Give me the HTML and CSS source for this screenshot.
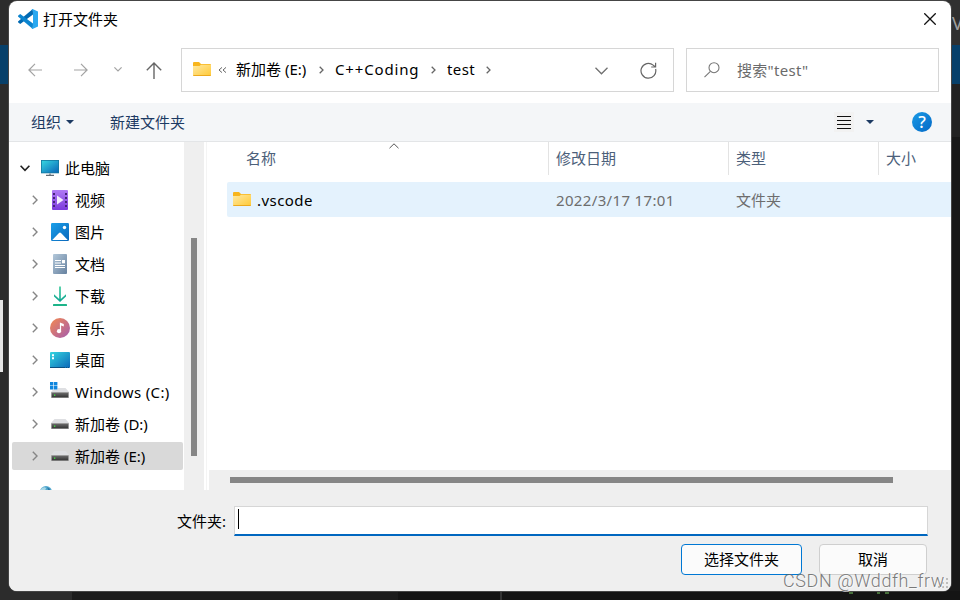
FILE: index.html
```
<!DOCTYPE html>
<html lang="zh-CN">
<head>
    <meta charset="UTF-8">
    <meta name="viewport" content="width=device-width, initial-scale=1.0">
    <title>打开文件夹</title>
    <link rel="stylesheet" href="styles.css">
</head>
<body>
    <!-- Shared icons -->
    <svg class="defs" width="0" height="0">
        <defs>
            <linearGradient id="folderFill" x1="0" y1="0" x2="1" y2="1">
                <stop offset="0" stop-color="#ffe9a2"/>
                <stop offset="1" stop-color="#ffc937"/>
            </linearGradient>
            <linearGradient id="screenFill" x1="0" y1="0" x2="1" y2="1">
                <stop offset="0" stop-color="#35d6e0"/>
                <stop offset="1" stop-color="#0b66b8"/>
            </linearGradient>
            <linearGradient id="videoFill" x1="0" y1="0" x2="0" y2="1">
                <stop offset="0" stop-color="#b07af5"/>
                <stop offset="1" stop-color="#7c3bdc"/>
            </linearGradient>
            <linearGradient id="pictureFill" x1="0" y1="0" x2="1" y2="1">
                <stop offset="0" stop-color="#1ba0ea"/>
                <stop offset="1" stop-color="#0a67ba"/>
            </linearGradient>
            <linearGradient id="docFill" x1="0" y1="0" x2="1" y2="1">
                <stop offset="0" stop-color="#b3c8da"/>
                <stop offset="1" stop-color="#66819f"/>
            </linearGradient>
            <linearGradient id="downFill" x1="0" y1="0" x2="0" y2="1">
                <stop offset="0" stop-color="#2fc796"/>
                <stop offset="1" stop-color="#12a594"/>
            </linearGradient>
            <linearGradient id="musicFill" x1="0" y1="0" x2="1" y2="1">
                <stop offset="0" stop-color="#f5894f"/>
                <stop offset="1" stop-color="#a35cb0"/>
            </linearGradient>
            <linearGradient id="driveFill" x1="0" y1="0" x2="0" y2="1">
                <stop offset="0" stop-color="#6a6a6a"/>
                <stop offset="1" stop-color="#333"/>
            </linearGradient>
            <symbol id="folder" viewBox="0 0 18 14">
                <path d="M0 1Q0 0 1 0H6L8 2H17Q18 2 18 3V6H0Z" fill="#f8b51c"/>
                <path d="M0 4H6.5L8 2.7H18V13Q18 14 17 14H1Q0 14 0 13Z" fill="url(#folderFill)"/>
                <path d="M0.3 13.5H17.7" stroke="#eda91c"/>
            </symbol>
            <symbol id="drive" viewBox="0 0 18 10">
                <path d="M3.5 0H14.5L18 4V5H0V4Z" fill="#dedfe2"/>
                <rect y="4" width="18" height="6" rx=".6" fill="#a8a8a8"/>
                <rect x=".8" y="4.8" width="16.4" height="4.6" fill="url(#driveFill)"/>
                <rect x="3" y="6.5" width="1.3" height="1.3" fill="#3cf03c"/>
            </symbol>
            <symbol id="chevron" viewBox="0 0 6 10">
                <path d="M.8 .8L5 5L.8 9.2" fill="none" stroke="#868686" stroke-width="1.4"/>
            </symbol>
        </defs>
    </svg>

    <!-- Editor window behind the dialog -->
    <div class="backdrop">
        <div class="strip-left"></div>
        <div class="strip-right"></div>
        <div class="strip-bottom"></div>
        <div class="selection"></div>
        <div class="slider"></div>
        <span class="menu-letter">V</span>
        <svg class="code" width="40" height="2" viewBox="0 0 40 2"><path d="M0 1H4M28 1H31M36 1H40" stroke="#47703c" stroke-width="2"/></svg>
    </div>

    <div class="dialog">
        <!-- Title Bar -->
        <div class="title-bar">
            <svg class="logo" width="20" height="20" viewBox="0 0 20 20">
                <path d="M14.8 0L15 5.5L2.2 15L0 13.2V12.6Z" fill="#0069b2"/>
                <path d="M14.8 20L15 14.5L2.2 5L0 6.8V7.4Z" fill="#0b84cf"/>
                <path d="M14.5 0L20 2.4V17.6L14.5 20L13.6 19.5L15 18V2L13.6 .5Z" fill="#29a8f0"/>
            </svg>
            <span class="title">打开文件夹</span>
            <svg class="close" width="12" height="12" viewBox="0 0 12 12">
                <path d="M.3 .3L11.7 11.7M11.7 .3L.3 11.7" stroke="#111" stroke-width="1.3"/>
            </svg>
        </div>

        <!-- Navigation -->
        <div class="nav-bar">
            <div class="nav-buttons">
                <svg width="14" height="14" viewBox="0 0 14 14"><path d="M14 7H1M7 .9L.9 7L7 13.1" fill="none" stroke="#a3a3a3" stroke-width="1.2"/></svg>
                <svg width="14" height="14" viewBox="0 0 14 14"><path d="M0 7H13M7 .9L13.1 7L7 13.1" fill="none" stroke="#a3a3a3" stroke-width="1.2"/></svg>
                <svg class="recent" width="8" height="5" viewBox="0 0 8 5"><path d="M.4 .4L4 4L7.6 .4" fill="none" stroke="#a3a3a3" stroke-width="1.2"/></svg>
                <svg class="up" width="16" height="17" viewBox="0 0 16 17"><path d="M8 17V1.2M.8 8.2L8 1L15.2 8.2" fill="none" stroke="#666" stroke-width="1.4"/></svg>
            </div>
            <div class="address">
                <svg class="folder" width="18" height="14"><use href="#folder"/></svg>
                <svg class="back-more" width="9" height="6" viewBox="0 0 9 6"><path d="M4 .4L1 3L4 5.6M8 .4L5 3L8 5.6" fill="none" stroke="#666"/></svg>
                <span class="crumb crumb-drive">新加卷 (E:)</span>
                <svg class="sep" width="5" height="8" viewBox="0 0 5 8"><path d="M.7 .7L4 4L.7 7.3" fill="none" stroke="#666" stroke-width="1.3"/></svg>
                <span class="crumb crumb-coding">C++Coding</span>
                <svg class="sep" width="5" height="8" viewBox="0 0 5 8"><path d="M.7 .7L4 4L.7 7.3" fill="none" stroke="#666" stroke-width="1.3"/></svg>
                <span class="crumb crumb-test">test</span>
                <svg class="sep" width="5" height="8" viewBox="0 0 5 8"><path d="M.7 .7L4 4L.7 7.3" fill="none" stroke="#666" stroke-width="1.3"/></svg>
                <svg class="history" width="13" height="8" viewBox="0 0 13 8"><path d="M.5 .7L6.5 6.8L12.5 .7" fill="none" stroke="#707070" stroke-width="1.3"/></svg>
                <svg class="refresh" width="17" height="17" viewBox="0 0 17 17"><path d="M15.6 7A7.4 7.4 0 1 1 13.2 3.1L15.5 5M15.6 .8V5H11.2" fill="none" stroke="#666" stroke-width="1.2"/></svg>
            </div>
            <div class="search">
                <svg width="16" height="16" viewBox="0 0 16 16"><circle cx="10" cy="5.7" r="5" fill="none" stroke="#777" stroke-width="1.1"/><path d="M6.4 9.3L.5 15.2" stroke="#777" stroke-width="1.1"/></svg>
                <span>搜索"test"</span>
            </div>
        </div>

        <!-- Toolbar -->
        <div class="toolbar">
            <span>组织</span>
            <i class="caret"></i>
            <span class="new-folder">新建文件夹</span>
            <div class="view">
                <svg width="14" height="13" viewBox="0 0 14 13"><path d="M0 .5H14M0 4.5H14M0 8.5H14M0 12.5H14" stroke="#111"/></svg>
            </div>
            <i class="caret view-caret"></i>
            <div class="help">?</div>
        </div>

        <div class="main">
            <!-- Folder Tree -->
            <div class="tree">
                <div class="node root">
                    <svg class="open" width="10" height="7" viewBox="0 0 10 7"><path d="M.6 .8L5 5.4L9.4 .8" fill="none" stroke="#222" stroke-width="1.6"/></svg>
                    <div class="icon">
                        <svg width="18" height="16" viewBox="0 0 18 16">
                            <rect width="18" height="13.3" fill="#14789e"/>
                            <rect x=".8" y=".8" width="16.4" height="11.7" fill="url(#screenFill)"/>
                            <path d="M8 13.3H10V15H8Z" fill="#9aa6b0"/>
                            <path d="M5 15.3H13" stroke="#5f6b74" stroke-width="1.2"/>
                        </svg>
                    </div>
                    <span>此电脑</span>
                </div>
                <div class="node">
                    <svg class="chevron" width="6" height="10"><use href="#chevron"/></svg>
                    <div class="icon">
                        <svg width="16" height="20" viewBox="0 0 16 20">
                            <rect width="16" height="20" rx="1" fill="url(#videoFill)"/>
                            <path d="M2 3V19M14 3V19" stroke="#46237a" stroke-width="2" stroke-dasharray="2 2"/>
                            <path d="M5 5.5L11.5 10L5 14.5Z" fill="#f3ecfd"/>
                        </svg>
                    </div>
                    <span>视频</span>
                </div>
                <div class="node">
                    <svg class="chevron" width="6" height="10"><use href="#chevron"/></svg>
                    <div class="icon">
                        <svg width="18" height="18" viewBox="0 0 18 18">
                            <rect width="18" height="18" rx="1.2" fill="url(#pictureFill)"/>
                            <path d="M1.3 17L8 10Q9 9 10 10L16.7 17Z" fill="#fff"/>
                            <circle cx="13.5" cy="4.5" r="1.7" fill="#fff"/>
                        </svg>
                    </div>
                    <span>图片</span>
                </div>
                <div class="node">
                    <svg class="chevron" width="6" height="10"><use href="#chevron"/></svg>
                    <div class="icon">
                        <svg width="14" height="20" viewBox="0 0 14 20">
                            <rect width="14" height="20" rx="1" fill="url(#docFill)"/>
                            <path d="M2 6.5H8M2 9H8M2 11.5H12M2 13.5H12" stroke="#fff" stroke-width="1.1"/>
                            <rect x="9" y="6" width="3" height="3.3" fill="#fff"/>
                        </svg>
                    </div>
                    <span>文档</span>
                </div>
                <div class="node">
                    <svg class="chevron" width="6" height="10"><use href="#chevron"/></svg>
                    <div class="icon">
                        <svg width="14" height="20" viewBox="0 0 14 20">
                            <path d="M6.2 .5H7.8V13L13 8.2V10.4L7 16L1 10.4V8.2L6.2 13Z" fill="url(#downFill)"/>
                            <rect y="18" width="14" height="2" rx=".6" fill="#1db489"/>
                        </svg>
                    </div>
                    <span>下载</span>
                </div>
                <div class="node">
                    <svg class="chevron" width="6" height="10"><use href="#chevron"/></svg>
                    <div class="icon">
                        <svg width="20" height="20" viewBox="0 0 20 20">
                            <circle cx="10" cy="10" r="10" fill="url(#musicFill)"/>
                            <circle cx="9" cy="13.2" r="2.1" fill="#fff"/>
                            <path d="M9.9 13V4.5L13.8 6V8.5L11.1 7.5V13Z" fill="#fff"/>
                        </svg>
                    </div>
                    <span>音乐</span>
                </div>
                <div class="node">
                    <svg class="chevron" width="6" height="10"><use href="#chevron"/></svg>
                    <div class="icon">
                        <svg width="20" height="16" viewBox="0 0 20 16">
                            <rect width="20" height="16" rx="1" fill="url(#screenFill)"/>
                            <path d="M2 2.2H4V4.2H2ZM2 5.2H4V7.2H2Z" fill="#fff"/>
                            <path d="M0 15.5H15M16 15.5H17M18 15.5H19" stroke="#0b4f80"/>
                        </svg>
                    </div>
                    <span>桌面</span>
                </div>
                <div class="node">
                    <svg class="chevron" width="6" height="10"><use href="#chevron"/></svg>
                    <div class="icon">
                        <svg class="system-drive" width="20" height="16" viewBox="0 0 20 16">
                            <use href="#drive" x="1" y="6" width="18" height="10"/>
                            <rect width="7.6" height="7.6" fill="#fff"/>
                            <path d="M0 0H3.4V3.4H0ZM4 0H7.4V3.4H4ZM0 4H3.4V7.4H0ZM4 4H7.4V7.4H4Z" fill="#0f86de"/>
                        </svg>
                    </div>
                    <span class="latin">Windows (C:)</span>
                </div>
                <div class="node">
                    <svg class="chevron" width="6" height="10"><use href="#chevron"/></svg>
                    <div class="icon"><svg width="18" height="10"><use href="#drive"/></svg></div>
                    <span>新加卷 (D:)</span>
                </div>
                <div class="node selected">
                    <svg class="chevron" width="6" height="10"><use href="#chevron"/></svg>
                    <div class="icon"><svg width="18" height="10"><use href="#drive"/></svg></div>
                    <span>新加卷 (E:)</span>
                </div>
                <div class="network">
                    <svg width="12" height="12" viewBox="0 0 12 12"><circle cx="6" cy="6" r="6" fill="#54a9cf"/><path d="M1 3Q4 0 6 2L5 5H1Z" fill="#a9d8e6"/><path d="M7 1L10 3L9 6Z" fill="#2878a8"/></svg>
                </div>
            </div>
            <div class="tree-scroll"><div class="thumb"></div></div>

            <!-- File List -->
            <div class="files">
                <svg class="sort" width="10" height="6" viewBox="0 0 10 6"><path d="M.5 5.2L5 .8L9.5 5.2" fill="none" stroke="#555"/></svg>
                <div class="columns header">
                    <span>名称</span>
                    <span>修改日期</span>
                    <span>类型</span>
                    <span>大小</span>
                </div>
                <div class="columns file">
                    <span class="name"><svg width="18" height="14"><use href="#folder"/></svg>.vscode</span>
                    <span class="latin">2022/3/17 17:01</span>
                    <span>文件夹</span>
                    <span></span>
                </div>
                <div class="files-scroll"><div class="thumb"></div></div>
            </div>
        </div>

        <!-- Footer -->
        <div class="footer">
            <div class="field">
                <label>文件夹:</label>
                <div class="input"><i class="cursor"></i></div>
            </div>
            <div class="buttons">
                <button class="primary">选择文件夹</button>
                <button class="cancel">取消</button>
            </div>
        </div>
        <svg class="grip" width="10" height="10" viewBox="0 0 10 10">
            <path d="M8 0H10V2H8ZM4 4H6V6H4ZM8 4H10V6H8ZM0 8H2V10H0ZM4 8H6V10H4ZM8 8H10V10H8Z" fill="#bdbdbd"/>
        </svg>
    </div>

    <div class="watermark">CSDN @Wddfh_frw</div>
</body>
</html>
```
FILE: styles.css
```
* {
    box-sizing: border-box;
}

body {
    margin: 0;
    width: 960px;
    height: 600px;
    overflow: hidden;
    position: relative;
    background: #181818;
    font-family: "Noto Sans", "Noto Sans CJK SC", sans-serif;
    font-size: 15px;
    line-height: 20px;
    color: #000;
}

svg {
    display: block;
    flex: none;
}

.defs {
    position: absolute;
}

/* Editor behind the dialog */
.backdrop {
    position: absolute;
    inset: 0;
    overflow: hidden;
}

.backdrop div,
.backdrop span,
.backdrop svg {
    position: absolute;
}

.strip-left {
    left: 0;
    top: 0;
    width: 72px;
    height: 600px;
    background: #2c2c2c;
}

.strip-right {
    right: 0;
    top: 0;
    width: 888px;
    height: 137px;
    background: linear-gradient(#303030 84px, #222 84px);
}

.strip-bottom {
    left: 72px;
    bottom: 0;
    width: 888px;
    height: 9px;
    background: linear-gradient(90deg, #1c1c1c 326px, #141414 326px, #141414 428px, #333 428px, #333 430px, #141414 430px);
}

.selection {
    left: 0;
    top: 45px;
    width: 960px;
    height: 39px;
    background: #07406a;
}

.slider {
    left: 0;
    top: 300px;
    width: 3px;
    height: 72px;
    background: #e6e6e6;
}

.menu-letter {
    left: 952px;
    top: 13px;
    font-size: 18px;
    color: #a0a0a0;
}

.code {
    left: 849px;
    top: 592px;
}

/* Dialog */
.dialog {
    position: relative;
    display: flex;
    flex-direction: column;
    width: 942px;
    height: 590px;
    margin: 1px 0 0 9px;
    background: #fff;
    border-radius: 8px;
    box-shadow: 0 0 0 1px #454545;
    overflow: hidden;
}

.title-bar {
    display: flex;
    align-items: center;
    height: 36px;
    padding: 0 15px 0 9px;
}

.title {
    margin-left: 5px;
}

.close {
    margin-left: auto;
}

/* Navigation */
.nav-bar {
    display: flex;
    height: 66px;
    padding: 11px 12px 11px 0;
}

.nav-buttons {
    display: flex;
    align-items: center;
    width: 172px;
    padding-left: 19px;
}

.nav-buttons svg + svg {
    margin-left: 32px;
}

.nav-buttons svg + .recent {
    margin-left: 26px;
    margin-top: -2px;
}

.nav-buttons svg + .up {
    margin-left: 24px;
}

.address,
.search {
    display: flex;
    align-items: center;
    border: 1px solid #d6d6d6;
}

.address {
    width: 493px;
    padding: 0 16px 0 11px;
}

.folder {
    margin-top: -2px;
}

.back-more {
    margin-left: 7px;
}

.crumb {
    padding-bottom: 2px;
    white-space: nowrap;
}

.crumb-drive {
    width: 72px;
    margin-left: 9px;
}

.crumb-coding {
    width: 85px;
    letter-spacing: 0.85px;
}

.crumb-test {
    width: 28px;
    letter-spacing: 0.4px;
}

.crumb + .sep {
    margin: 0 11px;
}

.history {
    margin-left: auto;
    margin-top: 2px;
}

.refresh {
    margin-left: 32px;
}

.search {
    width: 253px;
    margin-left: 12px;
    padding-left: 17px;
    color: #6b6b6b;
}

.search span {
    margin-left: 17px;
    letter-spacing: 0.3px;
}

/* Toolbar */
.toolbar {
    display: flex;
    align-items: center;
    height: 39px;
    padding: 0 19px 0 22px;
    background: #f4f6f8;
    border-bottom: 1px solid #e3e5e7;
    color: #1c3a63;
}

.caret {
    margin-left: 5px;
    border: 4.5px solid transparent;
    border-top-color: #1c3a63;
    border-bottom: 0;
}

.new-folder {
    margin-left: 36px;
}

.view {
    display: flex;
    align-items: center;
    justify-content: center;
    width: 20px;
    height: 20px;
    margin-left: auto;
    background: #f2f2f2;
}

.view-caret {
    margin-left: 12px;
}

.help {
    width: 20px;
    height: 20px;
    margin-left: 38px;
    border-radius: 50%;
    background: linear-gradient(135deg, #1c9be6, #0268c6);
    color: #fff;
    font-size: 17px;
    font-weight: 500;
    text-align: center;
}

/* Folder Tree */
.main {
    display: flex;
    height: 348px;
}

.tree {
    width: 175px;
    padding: 12px 1px 0 3px;
    overflow: hidden;
}

.node {
    display: flex;
    align-items: center;
    height: 28px;
    margin-bottom: 4px;
    padding-left: 20px;
    border-radius: 2px;
    white-space: nowrap;
}

.node.root {
    padding-left: 8px;
}

.node.selected {
    background: #d9d9d9;
}

.icon {
    display: flex;
    align-items: center;
    justify-content: center;
    width: 20px;
    margin: 0 5px 0 12px;
}

.root .icon {
    margin-left: 10px;
}

.system-drive {
    margin-top: -5px;
}

.latin {
    letter-spacing: 0.35px;
}

.network {
    padding: 12px 0 0 28px;
}

.tree-scroll {
    width: 20px;
    padding: 96px 0 0 7px;
    background: #efefef;
}

.tree-scroll .thumb {
    width: 6px;
    height: 218px;
    background: #868686;
}

/* File List */
.files {
    position: relative;
    display: flex;
    flex-direction: column;
    flex: 1;
    margin-left: 2px;
    border-left: 1px solid #f4f4f4;
}

.sort {
    position: absolute;
    left: 182px;
    top: 1px;
}

.columns {
    display: grid;
    grid-template-columns: 321px 180px 150px 1fr;
    margin-left: 20px;
}

.columns span {
    padding-left: 7px;
}

.header {
    height: 32px;
    color: #4c607a;
    line-height: 33px;
}

.header span + span {
    border-left: 1px solid #e3e3e3;
}

.header span:first-child {
    padding-left: 19px;
}

.file {
    height: 35px;
    margin-top: 8px;
    background: #e4f2fd;
    border-radius: 2px 0 0 2px;
    line-height: 36px;
    color: #6d6d6d;
}

.file span + span {
    padding-left: 8px;
}

.file .name {
    display: flex;
    align-items: center;
    padding-left: 6px;
    color: #000;
    letter-spacing: 0.45px;
}

.name svg {
    margin: -3px 6px 0 0;
}

.files-scroll {
    height: 20px;
    margin: auto 0 0 2px;
    padding: 7px 0 0 21px;
    background: #efefef;
}

.files-scroll .thumb {
    width: 663px;
    height: 6px;
    background: #868686;
}

/* Footer */
.footer {
    flex: 1;
    padding: 16px 24px 0 0;
    background: #efefef;
}

.field {
    display: flex;
    justify-content: flex-end;
    margin-right: -1px;
}

.field label {
    margin: 5px 8px 0 0;
}

.input {
    width: 694px;
    height: 30px;
    padding: 2px 3px;
    background: #fff;
    border: 1px solid #d6d6d6;
    border-bottom: 2px solid #0067c0;
}

.cursor {
    display: block;
    width: 1px;
    height: 20px;
    background: #000;
}

.buttons {
    display: flex;
    justify-content: flex-end;
    gap: 17px;
    margin-top: 8px;
}

button {
    height: 31px;
    padding: 0 0 2px;
    background: #fbfbfb;
    border: 1px solid #cfcfcf;
    border-radius: 4px;
    font: inherit;
    color: #000;
}

.primary {
    width: 121px;
    border-color: #0078d4;
}

.cancel {
    width: 108px;
}

.grip {
    position: absolute;
    right: 3px;
    bottom: 3px;
}

.watermark {
    position: absolute;
    left: 783px;
    top: 571px;
    font-family: Roboto, sans-serif;
    font-size: 18px;
    font-weight: 300;
    letter-spacing: 0.6px;
    color: rgba(100, 100, 100, 0.85);
    text-shadow: 1px 1px 0 rgba(255, 255, 255, 0.6);
    white-space: nowrap;
}
```
